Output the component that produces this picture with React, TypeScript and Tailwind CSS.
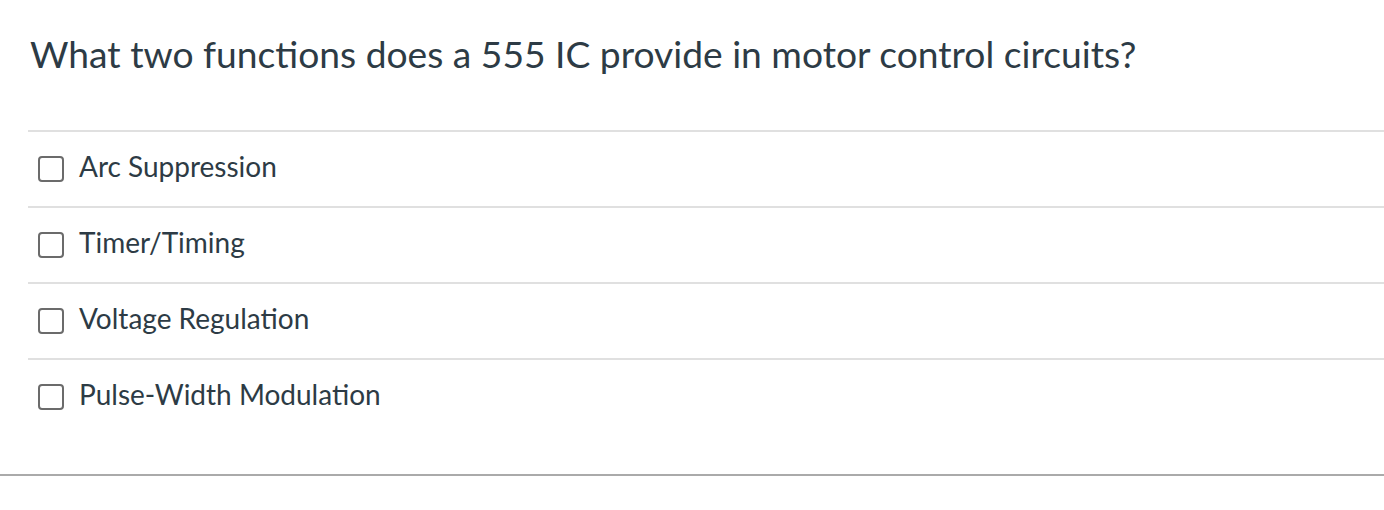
import React, { useState } from "react";

const answers: string[] = [
  "Arc Suppression",
  "Timer/Timing",
  "Voltage Regulation",
  "Pulse-Width Modulation",
];

const QuizQuestion: React.FC = () => {
  const [checked, setChecked] = useState<boolean[]>(answers.map(() => false));

  const toggle = (i: number): void => {
    setChecked((prev) => prev.map((v, idx) => (idx === i ? !v : v)));
  };

  return (
    <div className="w-full h-[510px] bg-white font-['Lato',sans-serif] text-[#2d3b45]">
      <div className="border-b-2 border-[#aaaaaa] pb-[40px]">
        <div className="pl-[28px]">
          <h1 className="pt-[32px] pl-[2px] text-[37.2px] leading-[44px] font-normal">
            What two functions does a 555 IC provide in motor control circuits?
          </h1>
          <div className="mt-[54px]">
            {answers.map((a, i) => (
              <label
                key={a}
                className="flex items-center h-[76px] border-t-2 border-[#e0e0e0] cursor-pointer"
              >
                <span
                  onClick={() => toggle(i)}
                  className="ml-[10px] w-[26px] h-[26px] rounded-[4px] border-2 border-[#6b6b6b] bg-white flex items-center justify-center"
                >
                  {checked[i] && (
                    <svg width="16" height="16" viewBox="0 0 16 16">
                      <path d="M3 8l3 3 7-7" stroke="#2d3b45" strokeWidth="2" fill="none" />
                    </svg>
                  )}
                </span>
                <span className="ml-[15px] text-[28px] leading-[32px] -mt-[6px]">{a}</span>
              </label>
            ))}
          </div>
        </div>
      </div>
    </div>
  );
};

export default function App() {
  return <QuizQuestion />;
}
